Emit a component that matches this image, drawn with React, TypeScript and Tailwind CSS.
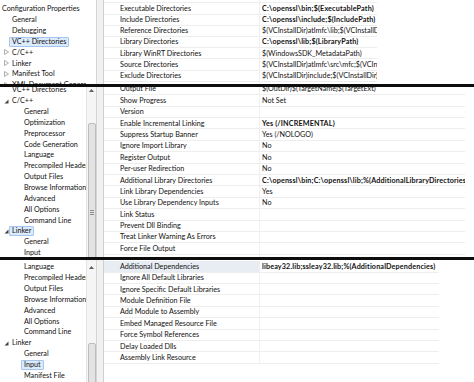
import React from 'react';

type TreeItem = {
  label: string;
  level: 0 | 1 | 2;
  arrow?: 'open' | 'closed';
  selected?: boolean;
};

type Row = { label: string; value?: string; bold?: boolean };

const pad: Record<string, string> = {
  '0': 'pl-[2px]',
  '1': 'pl-[12px]',
  '2': 'pl-[24px]',
  '0a': 'pl-[0px]',
  '1a': 'pl-[3px]',
  '2a': 'pl-[15px]',
};

function Arrow({ kind }: { kind: 'open' | 'closed' }) {
  return (
    <span className="w-[9px] h-full flex items-center shrink-0">
      {kind === 'closed' ? (
        <svg width="5" height="6" viewBox="0 0 5 6" className="ml-[1px]">
          <path d="M0.5 0.5 L4.5 3 L0.5 5.5 Z" fill="none" stroke="#9a9a9a" strokeWidth="0.8" />
        </svg>
      ) : (
        <svg width="5" height="5" viewBox="0 0 5 5" className="ml-[1px] mt-[1px]">
          <path d="M4.5 0.5 L4.5 4.5 L0.5 4.5 Z" fill="#444" />
        </svg>
      )}
    </span>
  );
}

function Tree({ items, offset }: { items: TreeItem[]; offset: string }) {
  return (
    <div className="w-[86px] shrink-0 overflow-hidden bg-white">
      <div className={offset}>
        {items.map((it, i) => (
          <div
            key={i}
            className={`h-[10.85px] flex items-center whitespace-nowrap ${pad[it.level + (it.arrow ? 'a' : '')]}`}
          >
            {it.arrow && <Arrow kind={it.arrow} />}
            {it.selected ? (
              <span className="-ml-[3px] px-[2px] h-[10px] flex items-center rounded-[1px] bg-[#dcebfc] border border-[#a4c6ee]">
                {it.label}
              </span>
            ) : (
              <span>{it.label}</span>
            )}
          </div>
        ))}
      </div>
    </div>
  );
}

function Scroll({ btn, thumb, grip }: { btn?: string; thumb?: string; grip?: boolean }) {
  return (
    <div className="w-[10px] shrink-0 flex flex-col items-center bg-[#f5f5f5] border-l border-[#e4e4e4]">
      {btn && (
        <div className={`${btn} h-[12px] w-[9px] shrink-0 flex items-center justify-center`}>
          <svg width="5" height="3" viewBox="0 0 5 3">
            <path d="M0 3 L2.5 0 L5 3 Z" fill="#606060" />
          </svg>
        </div>
      )}
      {thumb && (
        <div className={`${thumb} w-[8px] shrink-0 rounded-[2px] bg-[#e3e3e3] border border-[#bdbdbd] flex items-center justify-center`}>
          {grip && (
            <div className="flex flex-col gap-[1px]">
              <div className="w-[4px] h-px bg-[#8c8c8c]" />
              <div className="w-[4px] h-px bg-[#8c8c8c]" />
              <div className="w-[4px] h-px bg-[#8c8c8c]" />
            </div>
          )}
        </div>
      )}
    </div>
  );
}

function Grid({
  rows,
  offset,
  width,
  rowH,
  highlightFirst,
}: {
  rows: Row[];
  offset: string;
  width: string;
  rowH: string;
  highlightFirst?: boolean;
}) {
  return (
    <div className="flex-1 overflow-hidden bg-white border-l border-[#cfcfcf]">
      <div className={`${offset} ${width}`}>
        {rows.map((r, i) => (
          <div key={i} className={`${rowH} flex border-b border-[#eeeeee]`}>
            <div
              className={`w-[155px] shrink-0 pl-[16px] flex items-center whitespace-nowrap overflow-hidden ${
                highlightFirst && i === 0 ? 'bg-[#e8edf4]' : ''
              }`}
            >
              {r.label}
            </div>
            <div
              className={`flex-1 pl-[2px] flex items-center whitespace-nowrap overflow-hidden border-l border-[#f0f0f0] ${
                r.bold ? 'font-bold tracking-[0.15px]' : ''
              }`}
            >
              {r.value ?? ''}
            </div>
          </div>
        ))}
      </div>
    </div>
  );
}

function Splitter() {
  return <div className="w-[7px] shrink-0 bg-[#f1f1f1] border-l border-[#d6d6d6]" />;
}

function Bar() {
  return <div className="h-[3px] w-full bg-[#0d0d0d]" />;
}

const topTree: TreeItem[] = [
  { label: 'Configuration Properties', level: 0 },
  { label: 'General', level: 1 },
  { label: 'Debugging', level: 1 },
  { label: 'VC++ Directories', level: 1, selected: true },
  { label: 'C/C++', level: 1, arrow: 'closed' },
  { label: 'Linker', level: 1, arrow: 'closed' },
  { label: 'Manifest Tool', level: 1, arrow: 'closed' },
  { label: 'XML Document Generator', level: 1, arrow: 'closed' },
];

const topGrid: Row[] = [
  { label: '' },
  { label: 'Executable Directories', value: 'C:\\openssl\\bin;$(ExecutablePath)', bold: true },
  { label: 'Include Directories', value: 'C:\\openssl\\include;$(IncludePath)', bold: true },
  { label: 'Reference Directories', value: '$(VCInstallDir)atlmfc\\lib;$(VCInstallDir)lib' },
  { label: 'Library Directories', value: 'C:\\openssl\\lib;$(LibraryPath)', bold: true },
  { label: 'Library WinRT Directories', value: '$(WindowsSDK_MetadataPath)' },
  { label: 'Source Directories', value: '$(VCInstallDir)atlmfc\\src\\mfc;$(VCInstallDir)' },
  { label: 'Exclude Directories', value: '$(VCInstallDir)include;$(VCInstallDir)' },
  { label: '' },
];

const cppChildren = [
  'General',
  'Optimization',
  'Preprocessor',
  'Code Generation',
  'Language',
  'Precompiled Headers',
  'Output Files',
  'Browse Information',
  'Advanced',
  'All Options',
  'Command Line',
];

const midTree: TreeItem[] = [
  { label: 'VC++ Directories', level: 1 },
  { label: 'C/C++', level: 1, arrow: 'open' },
  ...cppChildren.map((l) => ({ label: l, level: 2 as const })),
  { label: 'Linker', level: 1, arrow: 'open', selected: true },
  { label: 'General', level: 2 },
  { label: 'Input', level: 2 },
];

const midGrid: Row[] = [
  { label: 'Output File', value: '$(OutDir)$(TargetName)$(TargetExt)' },
  { label: 'Show Progress', value: 'Not Set' },
  { label: 'Version' },
  { label: 'Enable Incremental Linking', value: 'Yes (/INCREMENTAL)', bold: true },
  { label: 'Suppress Startup Banner', value: 'Yes (/NOLOGO)' },
  { label: 'Ignore Import Library', value: 'No' },
  { label: 'Register Output', value: 'No' },
  { label: 'Per-user Redirection', value: 'No' },
  {
    label: 'Additional Library Directories',
    value: 'C:\\openssl\\bin;C:\\openssl\\lib;%(AdditionalLibraryDirectories)',
    bold: true,
  },
  { label: 'Link Library Dependencies', value: 'Yes' },
  { label: 'Use Library Dependency Inputs', value: 'No' },
  { label: 'Link Status' },
  { label: 'Prevent Dll Binding' },
  { label: 'Treat Linker Warning As Errors' },
  { label: 'Force File Output' },
  { label: '' },
];

const botTree: TreeItem[] = [
  ...cppChildren.slice(3).map((l) => ({ label: l, level: 2 as const })),
  { label: 'Linker', level: 1, arrow: 'open' },
  { label: 'General', level: 2 },
  { label: 'Input', level: 2, selected: true },
  { label: 'Manifest File', level: 2 },
  { label: 'Debugging', level: 2 },
];

const botGrid: Row[] = [
  { label: 'Additional Dependencies', value: 'libeay32.lib;ssleay32.lib;%(AdditionalDependencies)', bold: true },
  { label: 'Ignore All Default Libraries' },
  { label: 'Ignore Specific Default Libraries' },
  { label: 'Module Definition File' },
  { label: 'Add Module to Assembly' },
  { label: 'Embed Managed Resource File' },
  { label: 'Force Symbol References' },
  { label: 'Delay Loaded Dlls' },
  { label: 'Assembly Link Resource' },
];

export default function App() {
  return (
    <div className="w-[474px] h-[382px] overflow-hidden bg-white text-[#111] text-[7.2px] leading-none font-['Lato','Open_Sans',sans-serif]">
      {/* VC++ Directories page */}
      <div className="h-[84px] flex overflow-hidden">
        <Tree items={topTree} offset="mt-[3.6px]" />
        <div className="w-[10px] shrink-0 bg-white" />
        <Splitter />
        <Grid rows={topGrid} offset="mt-[-7.8px]" width="w-[273px]" rowH="h-[11.2px]" />
      </div>
      <Bar />

      {/* Linker > General page */}
      <div className="h-[170px] flex overflow-hidden">
        <Tree items={midTree} offset="mt-[-2.4px]" />
        <Scroll btn="mt-[-3px]" thumb="mt-[27px] h-[178px]" grip />
        <Splitter />
        <Grid rows={midGrid} offset="mt-[-3.2px]" width="w-[361px]" rowH="h-[11.4px]" />
      </div>
      <Bar />

      {/* Linker > Input page */}
      <div className="h-[122px] flex overflow-hidden">
        <Tree items={botTree} offset="mt-[-9.25px]" />
        <Scroll btn="mt-[1px]" thumb="mt-[70px] h-[60px]" />
        <Splitter />
        <Grid rows={botGrid} offset="mt-[1.3px]" width="w-[335px]" rowH="h-[11.4px]" highlightFirst />
      </div>
    </div>
  );
}
